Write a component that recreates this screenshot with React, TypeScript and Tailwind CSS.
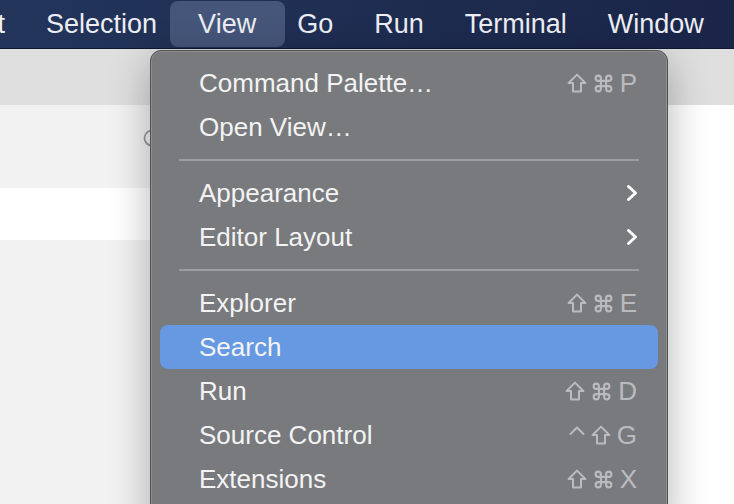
import React from "react";

const font = { fontFamily: '"Liberation Sans", Arial, sans-serif' };

const ShiftIcon = () => (
  <svg width="20" height="20" viewBox="0 0 20 20" className="shrink-0">
    <path
      d="M10 1.6 L18.4 10 H14 V18.6 H6 V10 H1.6 Z"
      fill="none"
      stroke="currentColor"
      strokeWidth="2"
      strokeLinejoin="round"
    />
  </svg>
);

const CmdIcon = () => (
  <svg width="21" height="21" viewBox="0 0 24 24" className="shrink-0">
    <path
      d="M15 6v12a3 3 0 1 0 3-3H6a3 3 0 1 0 3 3V6a3 3 0 1 0-3 3h12a3 3 0 1 0-3-3"
      fill="none"
      stroke="currentColor"
      strokeWidth="2.4"
      strokeLinecap="round"
      strokeLinejoin="round"
    />
  </svg>
);

const CtrlIcon = () => (
  <svg width="16" height="20" viewBox="0 0 16 20" className="shrink-0">
    <polyline
      points="1.5,9 8,2.5 14.5,9"
      fill="none"
      stroke="currentColor"
      strokeWidth="2"
      strokeLinecap="round"
      strokeLinejoin="round"
    />
  </svg>
);

const Chevron = () => (
  <svg width="12" height="18" viewBox="0 0 12 18" className="shrink-0">
    <polyline
      points="2.5,2.5 9.5,9 2.5,15.5"
      fill="none"
      stroke="#ffffff"
      strokeWidth="3"
      strokeLinecap="round"
      strokeLinejoin="round"
    />
  </svg>
);

type Item = {
  label: string;
  keys?: ("shift" | "cmd" | "ctrl")[];
  letter?: string;
  sub?: boolean;
  active?: boolean;
};

const groups: Item[][] = [
  [
    { label: "Command Palette…", keys: ["shift", "cmd"], letter: "P" },
    { label: "Open View…" },
  ],
  [
    { label: "Appearance", sub: true },
    { label: "Editor Layout", sub: true },
  ],
  [
    { label: "Explorer", keys: ["shift", "cmd"], letter: "E" },
    { label: "Search", active: true },
    { label: "Run", keys: ["shift", "cmd"], letter: "D" },
    { label: "Source Control", keys: ["ctrl", "shift"], letter: "G" },
    { label: "Extensions", keys: ["shift", "cmd"], letter: "X" },
  ],
];

function MenuRow({ item }: { item: Item }) {
  return (
    <div
      className={`flex h-[44px] items-center justify-between rounded-[8px] pl-[39px] pr-[21px] ${
        item.active ? "bg-[#6699e2]" : ""
      }`}
    >
      <span className="text-[26px] leading-[44px] text-[#f3f3f3]">{item.label}</span>
      {item.keys && (
        <span className="flex items-center gap-[6px] text-[#babbbe]">
          {item.keys.map((k, i) =>
            k === "shift" ? <ShiftIcon key={i} /> : k === "cmd" ? <CmdIcon key={i} /> : <CtrlIcon key={i} />
          )}
          <span className="text-[26px] leading-[44px]">{item.letter}</span>
        </span>
      )}
      {item.sub && (
        <span className="mr-[-1px] flex items-center">
          <Chevron />
        </span>
      )}
    </div>
  );
}

const barItems = ["Edit", "Selection", "View", "Go", "Run", "Terminal", "Window"];

export default function App() {
  return (
    <div className="relative h-[504px] w-[734px] overflow-hidden bg-white" style={font}>
      {/* menu bar */}
      <div className="flex h-[49px] items-stretch border-b border-[#0f1630] bg-linear-to-r from-[#23355b] to-[#1a2548]">
        <div className="ml-[-62px] flex items-stretch">
          {barItems.map((t) => (
            <div key={t} className="relative flex items-center px-[20.5px]">
              {t === "View" && (
                <span className="absolute inset-x-[-8px] top-[1px] bottom-[1px] rounded-[8px] bg-[#45567a]" />
              )}
              <span className="relative text-[27px] leading-none text-[#eceef3]">{t}</span>
            </div>
          ))}
        </div>
      </div>

      {/* window content */}
      <div className="flex h-[455px] flex-col">
        <div className="h-[56px] bg-[#dfdfdf]" />
        <div className="flex flex-1">
          <div className="flex w-[162px] flex-col">
            <div className="flex h-[83px] justify-end bg-[#f2f2f2] pt-[22px]">
              <svg width="20" height="20" viewBox="0 0 20 20">
                <path
                  d="M16 6.5A7.5 7.5 0 1 0 17.5 10"
                  fill="none"
                  stroke="#9a9a9a"
                  strokeWidth="1.8"
                  strokeLinecap="round"
                />
              </svg>
            </div>
            <div className="h-[52px] bg-white" />
            <div className="flex-1 bg-[#f2f2f2]" />
          </div>
          <div className="flex-1 bg-white" />
        </div>
      </div>

      {/* dropdown menu (overlay) */}
      <div className="absolute left-[150px] top-[50px] h-[480px] w-[518px] rounded-[11px] border border-[#505155] bg-[#797a7e] px-[9px] pt-[10px] shadow-[0_10px_40px_rgba(0,0,0,0.3)] ring-1 ring-inset ring-[#8d8e92]">
        {groups.map((g, gi) => (
          <div key={gi}>
            {gi > 0 && (
              <div className="flex h-[22px] items-center px-[19px]">
                <div className="h-[2px] w-full bg-[#9c9da1]" />
              </div>
            )}
            {g.map((it) => (
              <MenuRow key={it.label} item={it} />
            ))}
          </div>
        ))}
      </div>
    </div>
  );
}
